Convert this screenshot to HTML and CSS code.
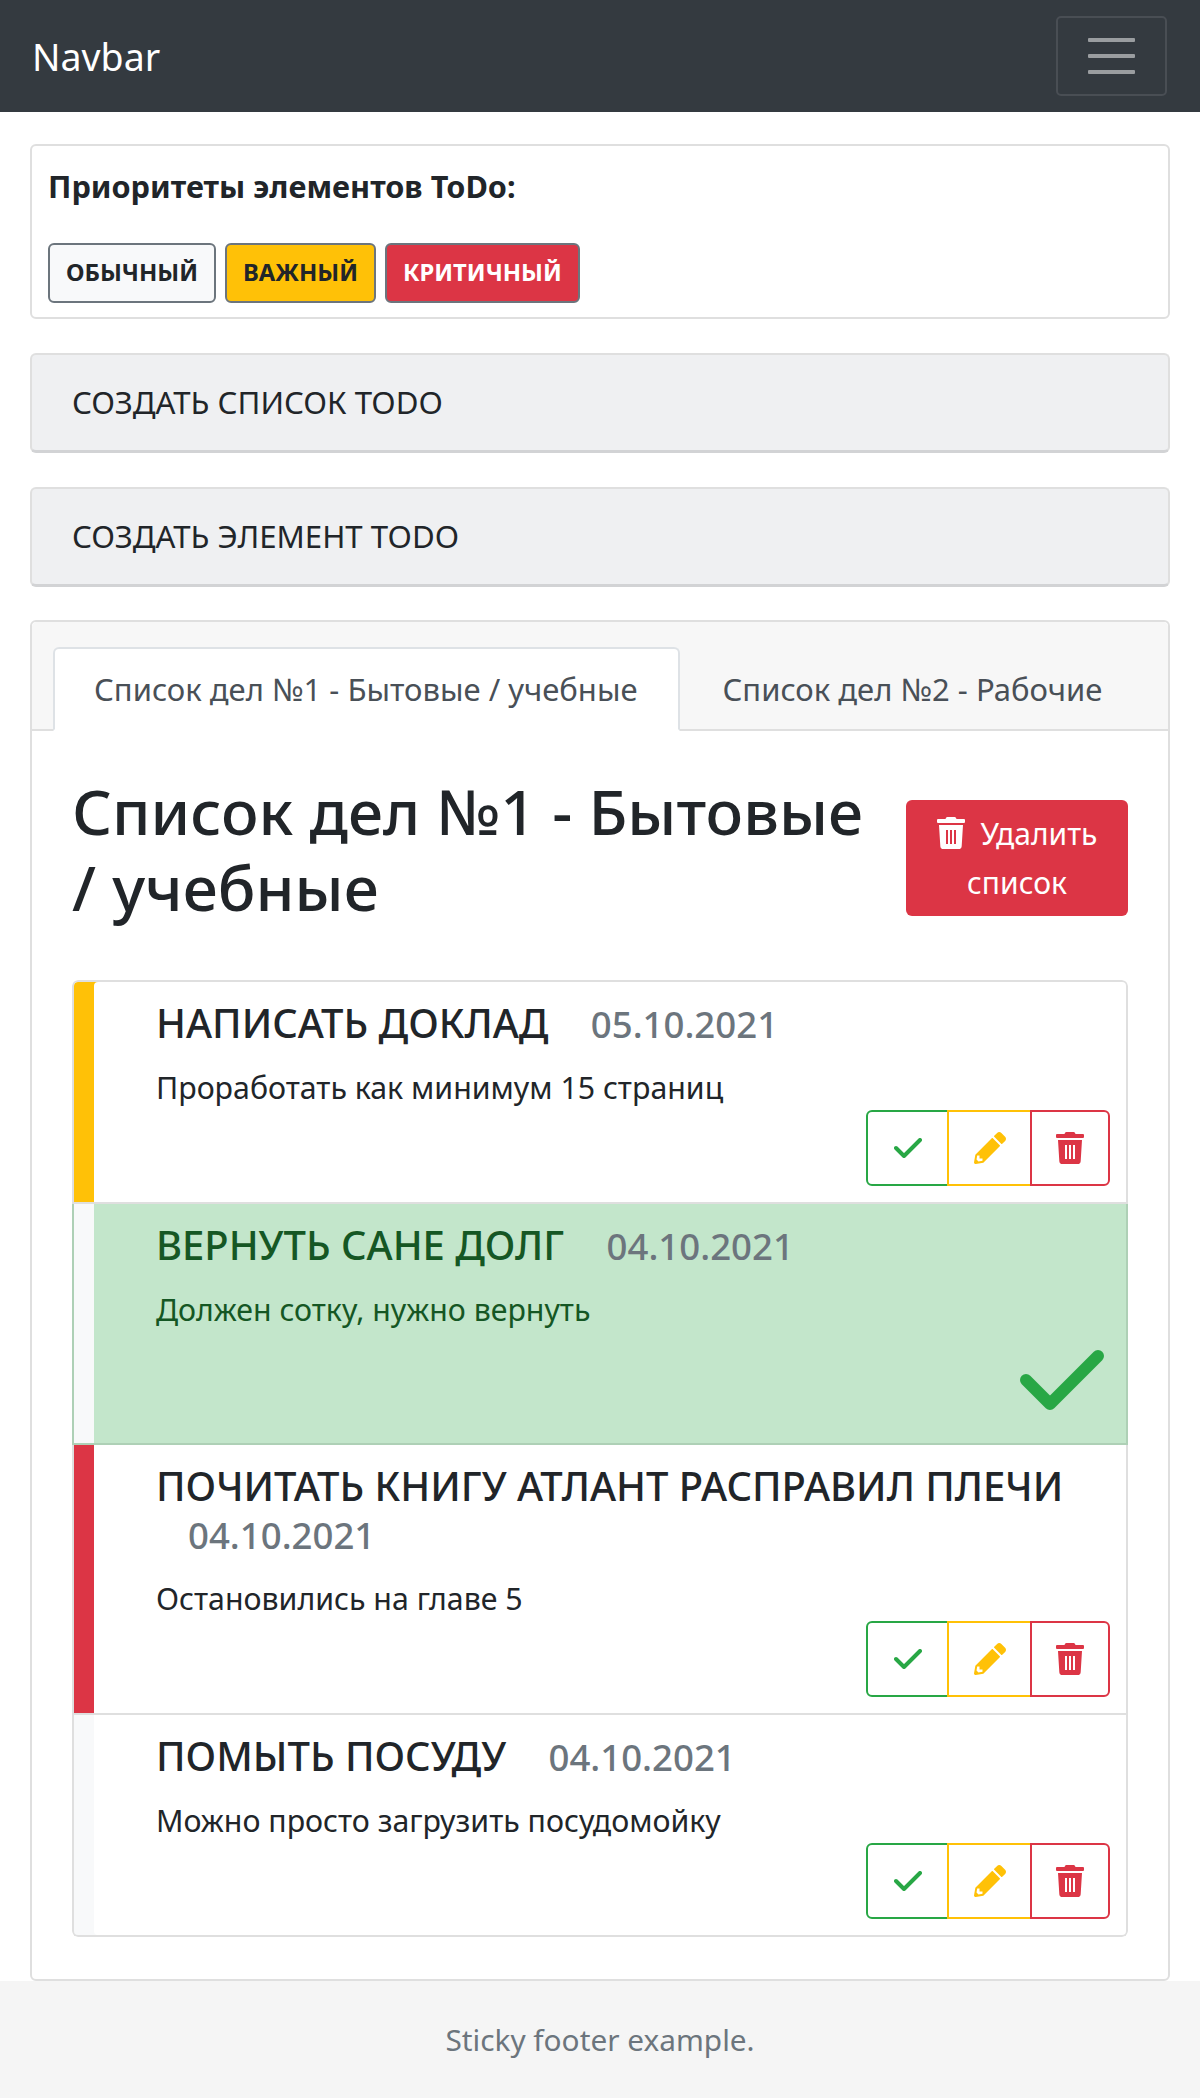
FILE: index.html
```html
<!DOCTYPE html>
<html lang="ru">
<head>
<meta charset="UTF-8">
<meta name="viewport" content="width=device-width, initial-scale=1.0">
<title>ToDo</title>
<link rel="stylesheet" href="styles.css">
</head>
<body>
<svg class="icon-defs" width="0" height="0">
    <symbol id="i-trash" viewBox="0 0 448 512" preserveAspectRatio="none">
        <path d="M432 32H312l-9.400-18.700A24 24 0 0 0 281.100 0H166.800a23.700 23.700 0 0 0-21.400 13.300L136 32H16A16 16 0 0 0 0 48v32a16 16 0 0 0 16 16h416a16 16 0 0 0 16-16V48a16 16 0 0 0-16-16zM53.200 467a48 48 0 0 0 47.900 45h245.800a48 48 0 0 0 47.900-45L416 128H32zM144 208h32v224h-32zm64 0h32v224h-32zm64 0h32v224h-32z"/>
    </symbol>
    <symbol id="i-pencil" viewBox="0 0 512 512">
        <path d="M497.900 142.100l-46.100 46.100c-4.700 4.700-12.300 4.700-17 0l-111-111c-4.700-4.700-4.700-12.300 0-17l46.100-46.100c18.700-18.700 49.100-18.700 67.900 0l60.100 60.100c18.800 18.700 18.800 49.100 0 67.900zM284.200 99.800L21.600 362.400.4 483.900c-2.900 16.400 11.400 30.600 27.800 27.800l121.500-21.300 262.600-262.600c4.700-4.700 4.700-12.300 0-17l-111-111c-4.800-4.700-12.400-4.700-17.100 0zM88 424h48v36.300l-64.500 11.300-31.100-31.100L51.700 376H88v48z"/>
    </symbol>
    <symbol id="i-check" viewBox="0 0 84 60">
        <path d="M6 30 L30 54 L78 6" fill="none" stroke="currentColor" stroke-width="12" stroke-linecap="round" stroke-linejoin="round"/>
    </symbol>
</svg>

<nav class="navbar">
    <a class="navbar-brand" href="#">Navbar</a>
    <button class="navbar-toggler" type="button" aria-label="Toggle navigation">
        <span class="toggler-line"></span>
        <span class="toggler-line"></span>
        <span class="toggler-line"></span>
    </button>
</nav>

<main class="content">
    <section class="card priority-card">
        <p class="priority-title">Приоритеты элементов ToDo:</p>
        <div class="priority-list">
            <span class="priority-badge badge-normal">ОБЫЧНЫЙ</span>
            <span class="priority-badge badge-important">ВАЖНЫЙ</span>
            <span class="priority-badge badge-critical">КРИТИЧНЫЙ</span>
        </div>
    </section>

    <section class="card collapse-bar">СОЗДАТЬ СПИСОК TODO</section>
    <section class="card collapse-bar">СОЗДАТЬ ЭЛЕМЕНТ TODO</section>

    <section class="card tabs-card">
        <div class="tabs-header">
            <a class="tab tab-active" href="#">Список дел №1 - Бытовые / учебные</a>
            <a class="tab tab-next" href="#">Список дел №2 - Рабочие</a>
        </div>
        <div class="tabs-body">
            <div class="list-head">
                <h1 class="list-title">Список дел №1 - Бытовые / учебные</h1>
                <button class="delete-list" type="button">
                    <svg class="icon delete-icon"><use href="#i-trash"></use></svg>Удалить список
                </button>
            </div>

            <ul class="todo-list">
                <li class="todo-item prio-important">
                    <h5 class="todo-title">НАПИСАТЬ ДОКЛАД <small class="todo-date">05.10.2021</small></h5>
                    <p class="todo-text">Проработать как минимум 15 страниц</p>
                    <div class="todo-actions">
                        <button class="act act-done" type="button"><svg class="icon icon-check"><use href="#i-check"></use></svg></button>
                        <button class="act act-edit" type="button"><svg class="icon icon-pencil"><use href="#i-pencil"></use></svg></button>
                        <button class="act act-remove" type="button"><svg class="icon icon-trash"><use href="#i-trash"></use></svg></button>
                    </div>
                </li>
                <li class="todo-item prio-normal todo-done">
                    <h5 class="todo-title">ВЕРНУТЬ САНЕ ДОЛГ <small class="todo-date">04.10.2021</small></h5>
                    <p class="todo-text">Должен сотку, нужно вернуть</p>
                    <div class="todo-actions">
                        <svg class="icon done-mark"><use href="#i-check"></use></svg>
                    </div>
                </li>
                <li class="todo-item prio-critical">
                    <h5 class="todo-title">ПОЧИТАТЬ КНИГУ АТЛАНТ РАСПРАВИЛ ПЛЕЧИ <small class="todo-date">04.10.2021</small></h5>
                    <p class="todo-text">Остановились на главе 5</p>
                    <div class="todo-actions">
                        <button class="act act-done" type="button"><svg class="icon icon-check"><use href="#i-check"></use></svg></button>
                        <button class="act act-edit" type="button"><svg class="icon icon-pencil"><use href="#i-pencil"></use></svg></button>
                        <button class="act act-remove" type="button"><svg class="icon icon-trash"><use href="#i-trash"></use></svg></button>
                    </div>
                </li>
                <li class="todo-item prio-normal">
                    <h5 class="todo-title">ПОМЫТЬ ПОСУДУ <small class="todo-date">04.10.2021</small></h5>
                    <p class="todo-text">Можно просто загрузить посудомойку</p>
                    <div class="todo-actions">
                        <button class="act act-done" type="button"><svg class="icon icon-check"><use href="#i-check"></use></svg></button>
                        <button class="act act-edit" type="button"><svg class="icon icon-pencil"><use href="#i-pencil"></use></svg></button>
                        <button class="act act-remove" type="button"><svg class="icon icon-trash"><use href="#i-trash"></use></svg></button>
                    </div>
                </li>
            </ul>
        </div>
    </section>
</main>

<footer class="footer">Sticky footer example.</footer>
</body>
</html>
```
FILE: styles.css
```css
* {
    box-sizing: border-box;
}

body {
    margin: 0;
    font-family: "Noto Sans", "Open Sans", sans-serif;
    font-size: 30.3px;
    line-height: 1.5;
    color: #212529;
    background-color: #fff;
}

.icon-defs {
    position: absolute;
}

.icon {
    display: block;
    fill: currentColor;
}

/* navbar */
.navbar {
    height: 112px;
    padding: 0 33px 0 32px;
    display: flex;
    align-items: center;
    justify-content: space-between;
    background-color: #343a40;
}

.navbar-brand {
    padding-top: 2px;
    color: #fff;
    font-size: 37.5px;
    text-decoration: none;
}

.navbar-toggler {
    width: 111px;
    height: 80px;
    padding: 0;
    display: flex;
    flex-direction: column;
    align-items: center;
    justify-content: center;
    gap: 12px;
    background: transparent;
    border: 2px solid #494e54;
    border-radius: 5px;
}

.toggler-line {
    width: 47px;
    height: 4px;
    border-radius: 1px;
    background-color: #9a9da0;
}

/* cards */
.content {
    padding: 32px 30px 0;
    display: flex;
    flex-direction: column;
    gap: 34px;
}

.card {
    background-color: #fff;
    border: 2px solid #dfdfdf;
    border-radius: 6px;
}

.priority-card {
    height: 175px;
    padding: 21px 16px;
}

.priority-title {
    margin: 0 0 38px;
    font-weight: 700;
    font-size: 30.7px;
    line-height: 38px;
}

.priority-list {
    display: flex;
    gap: 9px;
}

.priority-badge {
    height: 60px;
    padding: 0 16px;
    display: flex;
    align-items: center;
    font-size: 23.8px;
    font-weight: 700;
    border: 2px solid #6c757d;
    border-radius: 6px;
}

.badge-normal {
    background-color: #f8f9fa;
}

.badge-important {
    background-color: #ffc107;
}

.badge-critical {
    background-color: #dc3545;
    color: #fff;
}

.collapse-bar {
    height: 100px;
    padding: 0 40px;
    display: flex;
    align-items: center;
    font-size: 31.2px;
    background-color: #eff0f2;
    border-bottom: 3px solid #d2d3d5;
}

/* tabs */
.tabs-card {
    margin-top: -1px;
}

.tabs-header {
    height: 109px;
    padding: 25px 21px 0;
    display: flex;
    background-color: #f7f7f7;
    border-bottom: 2px solid #dfdfdf;
    border-radius: 5px 5px 0 0;
}

.tab {
    height: 84px;
    padding: 0 39px;
    display: flex;
    align-items: center;
    color: #495057;
    font-size: 31px;
    text-decoration: none;
    white-space: nowrap;
    border: 2px solid transparent;
}

.tab-active {
    padding-right: 40px;
    background-color: #fff;
    border-color: #dee2e6 #dee2e6 #fff;
    border-radius: 6px 6px 0 0;
}

.tab-next {
    padding-left: 41px;
}

.tabs-body {
    padding: 42px 40px 42px;
}

.list-head {
    display: flex;
    align-items: center;
    justify-content: space-between;
    gap: 30px;
    margin-bottom: 37px;
}

.list-title {
    margin: 0 0 18px;
    font-size: 62.4px;
    font-weight: 500;
    line-height: 76px;
}

.delete-list {
    flex: 0 0 222px;
    height: 116px;
    padding: 0 20px;
    font: inherit;
    font-size: 30px;
    line-height: 49px;
    color: #fff;
    background-color: #dc3545;
    border: none;
    border-radius: 6px;
}

.delete-icon {
    display: inline-block;
    width: 28px;
    height: 32px;
    margin-right: 16px;
    vertical-align: -4px;
}

/* todo list */
.todo-list {
    margin: 0;
    padding: 0;
    list-style: none;
    border-radius: 6px;
    overflow: hidden;
}

.todo-item {
    padding: 17px 16px 16px 82px;
    border: 2px solid #dfdfdf;
    border-top: none;
}

.todo-item:first-child {
    border-top: 2px solid #dfdfdf;
    border-radius: 6px 6px 0 0;
}

.todo-item:last-child {
    border-radius: 0 0 6px 6px;
}

/* priority strip along the left edge of each item */
.prio-important {
    box-shadow: inset 20px 0 0 #ffc107;
}

.prio-critical {
    box-shadow: inset 20px 0 0 #dc3545;
}

.prio-normal {
    box-shadow: inset 20px 0 0 #f8f9fa;
}

.todo-done {
    background-color: #c3e6cb;
    color: #155724;
    border-color: #aed0b6;
}

.todo-title {
    margin: 0 0 21px;
    font-size: 39.9px;
    font-weight: 500;
    line-height: 48px;
}

.todo-date {
    margin-left: 32px;
    color: #6c757d;
    font-size: 36.6px;
    line-height: 1;
}

.todo-text {
    margin: 0;
    line-height: 40px;
}

.todo-actions {
    margin-top: 2px;
    display: flex;
    justify-content: flex-end;
}

.act {
    height: 76px;
    padding: 0;
    display: flex;
    align-items: center;
    justify-content: center;
    background: #fff;
    border: 2px solid;
}

.icon-check {
    width: 28px;
    height: 20px;
}

.icon-pencil {
    width: 32px;
    height: 32px;
}

.icon-trash {
    width: 28px;
    height: 32px;
}

.act-done {
    width: 83px;
    color: #28a745;
    border-radius: 6px 0 0 6px;
}

.act-edit {
    width: 85px;
    margin-left: -2px;
    color: #ffc107;
}

.act-remove {
    width: 80px;
    margin-left: -2px;
    color: #dc3545;
    border-radius: 0 6px 6px 0;
}

.done-mark {
    width: 84px;
    height: 60px;
    margin: 18px 6px 17px 0;
    color: #28a745;
}

.footer {
    height: 118px;
    display: flex;
    align-items: center;
    justify-content: center;
    color: #6c757d;
    font-size: 29.8px;
    background-color: #f5f5f5;
}
```
